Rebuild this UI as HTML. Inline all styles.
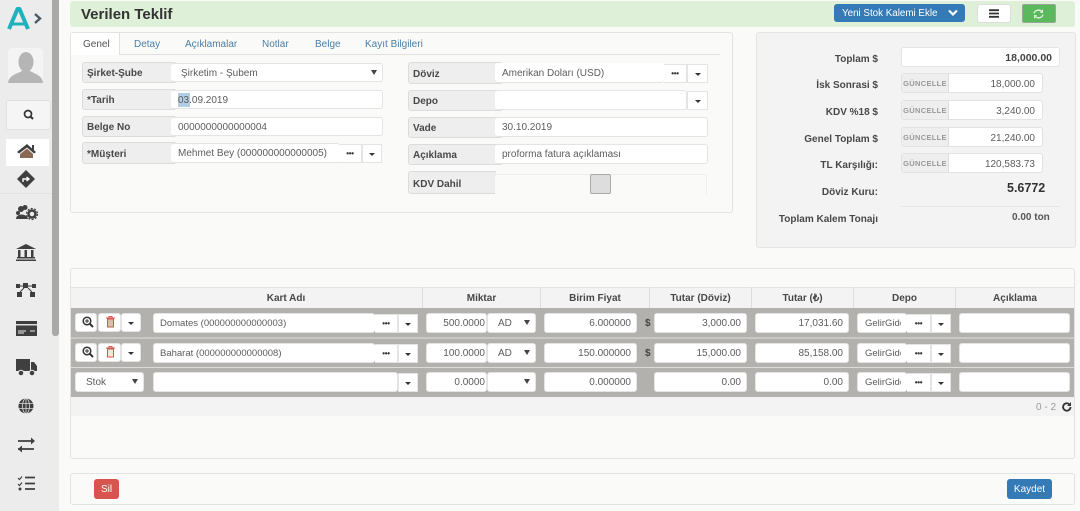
<!DOCTYPE html>
<html><head><meta charset="utf-8"><style>
html,body{margin:0;padding:0;width:1080px;height:511px;overflow:hidden;background:#fafaf8;font-family:"Liberation Sans",sans-serif;font-size:10px;color:#555}
#w{position:absolute;left:0;top:0;width:1080px;height:511px;overflow:hidden;filter:blur(.35px)}
div,span{position:absolute;box-sizing:border-box;white-space:nowrap}
svg{position:absolute;overflow:visible}
.g{background:#eee;border:1px solid #dcdcdc;border-radius:3px;color:#484848;font-weight:bold;padding-left:4px;line-height:22px}
.i{background:#fff;border:1px solid #e4e4e4;border-radius:3px;line-height:20px;padding:0 5px;color:#5c5c5c}
.r{text-align:right}
.b{background:#fff;border:1px solid #e4e4e4;height:19px}
.dots{color:#333;font-weight:bold;font-size:8px;text-align:center;letter-spacing:-.3px;line-height:18px}
.car:after{content:"";position:absolute;left:50%;top:8px;margin-left:-3px;border:3px solid transparent;border-top:3px solid #333;border-bottom:0}
.sel:after{content:"";position:absolute;right:5px;top:6px;border:3px solid transparent;border-top:5px solid #444;border-bottom:0}
.lbl{font-weight:bold;color:#484848;text-align:right;font-size:10px;left:756px;width:122px;line-height:13px}
.h{font-weight:bold;color:#484848;text-align:center;top:293px;line-height:12px;font-size:10px}
.tab{top:39px;color:#4a7fa8;font-size:10px;line-height:12px}
.gun{left:901px;width:142px;height:20px;background:#fff;border:1px solid #e2e2e2;border-radius:3px;text-align:right;padding-right:7px;line-height:22px;color:#5c5c5c}
.gun:before{content:"GÜNCELLE";position:absolute;left:0;top:0;width:46px;height:18px;line-height:19px;background:#eee;border-right:1px solid #ddd;color:#999;font-weight:bold;font-size:7.500px;text-align:center;letter-spacing:.3px}
.ic{fill:#3f3f3f}
.dep span{left:7px;top:0;width:36px;overflow:hidden;font-size:9.500px}
</style></head><body><div id="w">

<div style="left:0;top:0;width:59px;height:511px;background:#ececec"></div>
<div style="left:52px;top:0;width:7px;height:336px;background:#a9a9a9;border-radius:0 0 3px 3px"></div>
<svg style="left:0;top:0" width="52" height="511">
<path d="M9 29 L17.500 9 h2 L28 29" fill="none" stroke="#1fb2bd" stroke-width="4" stroke-linejoin="round"/><path d="M11 24 H26" stroke="#1fb2bd" stroke-width="3"/>
<path d="M35 14 L40 18.500 L35 23" fill="none" stroke="#4b5a68" stroke-width="2.400"/>
<rect x="8" y="48" width="35" height="35" rx="4" fill="#f4f4f4"/>
<ellipse cx="26" cy="62" rx="7.500" ry="10" fill="#b5b5b5"/><path d="M8 83 C9 75 17 74 22 71 h8 C35 74 42 75 43 83Z" fill="#b5b5b5"/>
<rect x="6.500" y="100.500" width="44" height="29" rx="2" fill="#f5f5f5" stroke="#e0e0e0"/>
<circle cx="28" cy="114" r="3.500" fill="none" stroke="#333" stroke-width="1.700"/><path d="M30.500 116.500L33 119" stroke="#333" stroke-width="2"/>
<rect x="6" y="139" width="43" height="27" fill="#fff"/>
<path d="M17 152 L27 144 L36 152 L34 153.500 L27 147.500 L19 153.500Z" class="ic"/><path d="M20 154 L27 148.500 L33 154 V158 H20Z" fill="#8a6a55"/><rect x="32" y="145" width="2" height="5" class="ic"/>
<path d="M26 170 L35 179 L26 188 L17 179Z" class="ic"/><path d="M23 182 V179 H28 M26.500 177 L29 179 L26.500 181" stroke="#fff" stroke-width="1.400" fill="none"/>
<path d="M0 193.500H52" stroke="#e2e2e2"/>
<circle cx="21" cy="209" r="3" class="ic"/><circle cx="18" cy="213" r="2" class="ic"/><path d="M16 219 C16 213 27 213 28 219 Z" class="ic"/><circle cx="32" cy="214" r="3.500" fill="none" stroke="#3f3f3f" stroke-width="2.500"/><circle cx="32" cy="214" r="5.500" fill="none" stroke="#3f3f3f" stroke-width="1.200" stroke-dasharray="2 1.500"/><circle cx="25" cy="207.500" r="2.500" class="ic"/>
<path d="M26 244 L36 249 H16Z" class="ic"/><rect x="18" y="250" width="2.500" height="7" class="ic"/><rect x="24.500" y="250" width="2.500" height="7" class="ic"/><rect x="31" y="250" width="2.500" height="7" class="ic"/><rect x="17" y="257" width="18" height="1.500" class="ic"/><rect x="16" y="259.500" width="20" height="1.500" class="ic"/>
<rect x="23" y="283" width="5" height="5" class="ic"/><rect x="17" y="292" width="5" height="5" class="ic"/><rect x="30" y="292" width="5" height="5" class="ic"/><rect x="16" y="284" width="4" height="4" class="ic"/><rect x="32" y="284" width="4" height="4" class="ic"/><path d="M20 286H23M28 286H32M24 288L20 292M28 288L32 292" stroke="#3f3f3f"/>
<rect x="16" y="321" width="21" height="15" class="ic"/><rect x="16" y="324" width="21" height="1.500" fill="#ddd"/><path d="M18 331H26M18 333H24M30 331H35" stroke="#ccc" stroke-width="1.200"/>
<path d="M16 359 H30 V371 H16Z" class="ic"/><path d="M31 362 H34 L37 366 V371 H31Z" class="ic"/><circle cx="21" cy="373" r="2.800" class="ic" stroke="#eee"/><circle cx="32" cy="373" r="2.800" class="ic" stroke="#eee"/>
<circle cx="26" cy="406" r="7.500" class="ic"/><path d="M18 403.500H34M18 408.500H34M26 398V414" stroke="#ddd" stroke-width=".8"/><ellipse cx="26" cy="406" rx="3.500" ry="7.500" fill="none" stroke="#ddd" stroke-width=".8"/>
<path d="M18 441H32M18 449H34" stroke="#3f3f3f" stroke-width="1.700"/><path d="M31 437.500L35 441L31 444.500ZM22 445.500L18 449L22 452.500Z" class="ic"/>
<path d="M25 477.500H35M25 483.500H35M25 489H35" stroke="#3f3f3f" stroke-width="1.800"/><path d="M18 478L19.500 479.500L22 476.500M18 484L19.500 485.500L22 482.500" fill="none" stroke="#3f3f3f" stroke-width="1.100"/><circle cx="20" cy="489" r="1.500" class="ic"/>
</svg>

<div style="left:70px;top:1px;width:1005px;height:26px;background:#dff0d8;border-radius:3px"></div>
<div style="left:81px;top:6px;font-size:15px;font-weight:bold;color:#333;line-height:17px">Verilen Teklif</div>
<div style="left:834px;top:4px;width:131px;height:18px;background:#337ab7;border-radius:3px;color:#fff;font-size:9.800px;line-height:19px;padding-left:8px">Yeni Stok Kalemi Ekle</div>
<svg style="left:948px;top:9px" width="12" height="8"><path d="M1 1.500L5 5.500L9 1.500" fill="none" stroke="#fff" stroke-width="2.200"/></svg>
<div style="left:977px;top:4px;width:34px;height:19px;background:#fff;border:1px solid #ddd;border-radius:3px"></div>
<svg style="left:989px;top:9px" width="10" height="9"><path d="M0 1.200H10M0 4.500H10M0 7.800H10" stroke="#333" stroke-width="1.800"/></svg>
<div style="left:1022px;top:4px;width:34px;height:19px;background:#5cb85c;border:1px solid #9aa69a;border-radius:2px"></div>
<svg style="left:1033px;top:9px" width="12" height="10"><path d="M1 4.500A4.500 4.500 0 0 1 9 3M10 5.500A4.500 4.500 0 0 1 2 7" fill="none" stroke="#d8f0d8" stroke-width="1.400"/><path d="M10 0V4H7ZM1 10V6H4Z" fill="#d8f0d8"/></svg>

<div style="left:70px;top:32px;width:663px;height:181px;background:#fafaf8;border:1px solid #e3e3e3;border-radius:3px"></div>
<div style="left:71px;top:54px;width:649px;height:1px;background:#e0e0e0"></div>
<div style="left:71px;top:33px;width:49px;height:22px;background:#fff;border-right:1px solid #e0e0e0"></div>
<div class="tab" style="left:83px;color:#555">Genel</div>
<div class="tab" style="left:134px">Detay</div>
<div class="tab" style="left:185px">Açıklamalar</div>
<div class="tab" style="left:262px">Notlar</div>
<div class="tab" style="left:315px">Belge</div>
<div class="tab" style="left:365px">Kayıt Bilgileri</div>

<div class="g" style="left:82px;top:62px;width:95px;height:21px">Şirket-Şube</div>
<div class="i sel" style="left:171px;top:63px;width:212px;height:19px;padding-left:10px;border-left:0">Şirketim - Şubem</div>
<div class="g" style="left:82px;top:89px;width:95px;height:21px">*Tarih</div>
<div class="i" style="left:171px;top:90px;width:212px;height:19px;border-left:0;padding-left:7px"><span style="left:7px;top:2px;width:12px;height:14px;background:#b3cde3"></span><span style="left:7px;top:0">03.09.2019</span></div>
<div class="g" style="left:82px;top:116px;width:95px;height:21px">Belge No</div>
<div class="i" style="left:171px;top:117px;width:212px;height:19px;border-left:0;padding-left:7px">0000000000000004</div>
<div class="g" style="left:82px;top:142px;width:95px;height:22px;line-height:23px">*Müşteri</div>
<div class="i" style="left:171px;top:143px;width:169px;height:20px;border-left:0;border-right:0;padding-left:7px;z-index:1">Mehmet Bey (000000000000005)</div>
<div class="b dots" style="left:339px;top:144px;width:23px;border-left:0">•••</div>
<div class="b car" style="left:362px;top:144px;width:20px"></div>

<div class="g" style="left:408px;top:62px;width:95px;height:22px;line-height:23px">Döviz</div>
<div class="i" style="left:495px;top:63px;width:169px;height:20px;border:0;border-bottom:1px solid #e4e4e4;padding-left:7px;line-height:21px">Amerikan Doları (USD)</div>
<div class="b dots" style="left:664px;top:64px;width:23px;border-left:0">•••</div>
<div class="b car" style="left:687px;top:64px;width:21px"></div>
<div class="g" style="left:408px;top:90px;width:95px;height:21px">Depo</div>
<div class="i" style="left:495px;top:90px;width:192px;height:20px;border-left:0"></div>
<div class="b car" style="left:687px;top:91px;width:21px"></div>
<div class="g" style="left:408px;top:117px;width:95px;height:21px">Vade</div>
<div class="i" style="left:495px;top:117px;width:213px;height:20px;border-left:0;padding-left:7px">30.10.2019</div>
<div class="g" style="left:408px;top:144px;width:95px;height:21px">Açıklama</div>
<div class="i" style="left:495px;top:144px;width:213px;height:20px;border-left:0;padding-left:7px">proforma fatura açıklaması</div>
<div class="g" style="left:408px;top:171px;width:88px;height:23px;line-height:25px;border-right:0;border-radius:3px 0 0 3px">KDV Dahil</div>
<div style="left:495px;top:174px;width:212px;height:20px;background:#fafaf8;border-top:1px solid #eee;border-right:1px solid #eee"></div>
<div style="left:590px;top:174px;width:21px;height:20px;background:#ddd;border:1px solid #aaa;border-radius:2px"></div>

<div style="left:756px;top:32px;width:320px;height:216px;background:#f3f3f3;border:1px solid #e5e5e5;border-radius:3px"></div>
<div class="lbl" style="top:53px">Toplam $</div>
<div class="i r" style="left:901px;top:47px;width:159px;height:20px;font-weight:bold;color:#444;font-size:10.500px;padding-right:7px">18,000.00</div>
<div class="lbl" style="top:79px">İsk Sonrasi $</div>
<div class="gun" style="top:73px">18,000.00</div>
<div class="lbl" style="top:106px">KDV %18 $</div>
<div class="gun" style="top:100px">3,240.00</div>
<div class="lbl" style="top:133px">Genel Toplam $</div>
<div class="gun" style="top:127px">21,240.00</div>
<div class="lbl" style="top:159px">TL Karşılığı:</div>
<div class="gun" style="top:153px">120,583.73</div>
<div class="lbl" style="top:186px">Döviz Kuru:</div>
<div style="left:1007px;top:181px;font-size:12.500px;font-weight:bold;color:#333;line-height:14px">5.6772</div>
<div style="left:901px;top:206px;width:159px;height:1px;background:#e6e6e6"></div>
<div class="lbl" style="top:213px">Toplam Kalem Tonajı</div>
<div style="left:1012px;top:212px;font-weight:bold;color:#555;font-size:10px;line-height:12px">0.00 ton</div>

<div style="left:70px;top:268px;width:1005px;height:191px;background:#fafaf8;border:1px solid #e3e3e3;border-radius:3px"></div>
<div style="left:71px;top:287px;width:1003px;height:21px;background:#f3f3f3;border-top:1px solid #e5e5e5"></div>
<div style="left:71px;top:308px;width:1003px;height:89px;background:#b2b1ae"></div>
<div style="left:71px;top:337px;width:1003px;height:2px;background:#c9c8c6"></div>
<div style="left:71px;top:367px;width:1003px;height:1px;background:#dcdbd9"></div>
<div style="left:71px;top:397px;width:1003px;height:19px;background:#f3f3f3"></div>
<div style="left:422px;top:287px;width:1px;height:21px;background:#ddd"></div>
<div style="left:540px;top:287px;width:1px;height:21px;background:#ddd"></div>
<div style="left:649px;top:287px;width:1px;height:21px;background:#ddd"></div>
<div style="left:751px;top:287px;width:1px;height:21px;background:#ddd"></div>
<div style="left:853px;top:287px;width:1px;height:21px;background:#ddd"></div>
<div style="left:955px;top:287px;width:1px;height:21px;background:#ddd"></div>
<div class="h" style="left:71px;width:430px">Kart Adı</div>
<div class="h" style="left:423px;width:117px">Miktar</div>
<div class="h" style="left:541px;width:108px">Birim Fiyat</div>
<div class="h" style="left:650px;width:101px">Tutar (Döviz)</div>
<div class="h" style="left:752px;width:101px">Tutar (₺)</div>
<div class="h" style="left:854px;width:101px">Depo</div>
<div class="h" style="left:956px;width:118px">Açıklama</div>

<div class="i" style="left:75px;top:313px;width:22px;height:19px"></div>
<div class="i" style="left:98px;top:313px;width:23px;height:19px"></div>
<div class="i car" style="left:121px;top:313px;width:20px;height:19px"></div>
<svg style="left:82px;top:316px" width="14" height="13"><circle cx="5" cy="5" r="3.800" fill="none" stroke="#333" stroke-width="1.500"/><path d="M8 8L11 11" stroke="#333" stroke-width="2"/><path d="M3 5H7M5 3V7" stroke="#333"/></svg>
<svg style="left:105px;top:315px" width="12" height="14"><path d="M1 3H10M4 3V1.500H7V3" stroke="#d9534f" fill="none"/><path d="M2.500 4H8.500V12H2.500Z" fill="#d8c0a8" stroke="#d9534f"/></svg>
<div class="i" style="left:153px;top:313px;width:222px;height:20px;border-right:0;font-size:9.500px;padding-left:6px">Domates (000000000000003)</div>
<div class="b dots" style="left:375px;top:314px;width:23px;border-left:0">•••</div>
<div class="b car" style="left:398px;top:314px;width:20px"></div>
<div class="i r" style="left:426px;top:313px;width:61px;height:20px;font-size:10px;padding-right:1px">500.0000</div>
<div class="i sel" style="left:487px;top:313px;width:49px;height:20px;padding-left:10px;font-size:10px">AD</div>
<div class="i r" style="left:544px;top:313px;width:93px;height:20px">6.000000</div>
<span style="left:645px;top:318px;font-weight:bold;color:#444">$</span>
<div class="i r" style="left:654px;top:313px;width:93px;height:20px">3,000.00</div>
<div class="i r" style="left:755px;top:313px;width:94px;height:20px">17,031.60</div>
<div class="i dep" style="left:857px;top:313px;width:50px;height:20px;border-right:0"><span>GelirGider</span></div>
<div class="b dots" style="left:907px;top:314px;width:24px;border-left:0">•••</div>
<div class="b car" style="left:931px;top:314px;width:20px"></div>
<div class="i" style="left:959px;top:313px;width:111px;height:20px"></div>

<div class="i" style="left:75px;top:343px;width:22px;height:19px"></div>
<div class="i" style="left:98px;top:343px;width:23px;height:19px"></div>
<div class="i car" style="left:121px;top:343px;width:20px;height:19px"></div>
<svg style="left:82px;top:346px" width="14" height="13"><circle cx="5" cy="5" r="3.800" fill="none" stroke="#333" stroke-width="1.500"/><path d="M8 8L11 11" stroke="#333" stroke-width="2"/><path d="M3 5H7M5 3V7" stroke="#333"/></svg>
<svg style="left:105px;top:345px" width="12" height="14"><path d="M1 3H10M4 3V1.500H7V3" stroke="#d9534f" fill="none"/><path d="M2.500 4H8.500V12H2.500Z" fill="#f3e6dc" stroke="#d9534f"/></svg>
<div class="i" style="left:153px;top:343px;width:222px;height:20px;border-right:0;font-size:9.500px;padding-left:6px">Baharat (000000000000008)</div>
<div class="b dots" style="left:375px;top:344px;width:23px;border-left:0">•••</div>
<div class="b car" style="left:398px;top:344px;width:20px"></div>
<div class="i r" style="left:426px;top:343px;width:61px;height:20px;padding-right:1px">100.0000</div>
<div class="i sel" style="left:487px;top:343px;width:49px;height:20px;padding-left:10px">AD</div>
<div class="i r" style="left:544px;top:343px;width:93px;height:20px">150.000000</div>
<span style="left:645px;top:348px;font-weight:bold;color:#444">$</span>
<div class="i r" style="left:654px;top:343px;width:93px;height:20px">15,000.00</div>
<div class="i r" style="left:755px;top:343px;width:94px;height:20px">85,158.00</div>
<div class="i dep" style="left:857px;top:343px;width:50px;height:20px;border-right:0"><span>GelirGider</span></div>
<div class="b dots" style="left:907px;top:344px;width:24px;border-left:0">•••</div>
<div class="b car" style="left:931px;top:344px;width:20px"></div>
<div class="i" style="left:959px;top:343px;width:111px;height:20px"></div>

<div class="i sel" style="left:75px;top:372px;width:69px;height:20px;padding-left:10px">Stok</div>
<div class="i" style="left:153px;top:372px;width:245px;height:20px"></div>
<div class="b car" style="left:398px;top:373px;width:20px"></div>
<div class="i r" style="left:426px;top:372px;width:61px;height:20px;padding-right:1px">0.0000</div>
<div class="i sel" style="left:487px;top:372px;width:49px;height:20px"></div>
<div class="i r" style="left:544px;top:372px;width:93px;height:20px">0.000000</div>
<div class="i r" style="left:654px;top:372px;width:93px;height:20px">0.00</div>
<div class="i r" style="left:755px;top:372px;width:94px;height:20px">0.00</div>
<div class="i dep" style="left:857px;top:372px;width:50px;height:20px;border-right:0"><span>GelirGider</span></div>
<div class="b dots" style="left:907px;top:373px;width:24px;border-left:0">•••</div>
<div class="b car" style="left:931px;top:373px;width:20px"></div>
<div class="i" style="left:959px;top:372px;width:111px;height:20px"></div>

<div style="left:1036px;top:402px;color:#999;font-size:10px;line-height:12px">0 - 2</div>
<svg style="left:1062px;top:402px" width="10" height="10"><path d="M8.500 5A3.700 3.700 0 1 1 7 2" fill="none" stroke="#333" stroke-width="1.800"/><path d="M9 0V4H5Z" fill="#333"/></svg>

<div style="left:70px;top:473px;width:1005px;height:32px;background:#fafaf8;border:1px solid #e3e3e3;border-radius:3px"></div>
<div style="left:94px;top:479px;width:25px;height:20px;background:#d9534f;border-radius:3px;color:#fff;text-align:center;line-height:21px">Sil</div>
<div style="left:1007px;top:479px;width:45px;height:20px;background:#337ab7;border-radius:3px;color:#fff;text-align:center;line-height:21px">Kaydet</div>
</div></body></html>
